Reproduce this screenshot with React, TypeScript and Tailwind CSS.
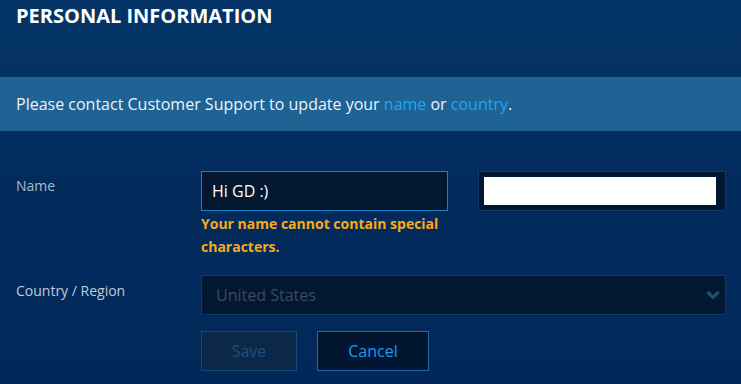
import { useState } from 'react';

const font = { fontFamily: '"Open Sans", "Liberation Sans", sans-serif' };

export default function App() {
  const [name, setName] = useState('Hi GD :)');

  return (
    <div
      style={font}
      className="w-[741px] h-[384px] overflow-hidden bg-gradient-to-b from-[#043566] via-[#022b5c] to-[#02285a] text-white"
    >
      <h1 className="px-4 pt-[2px] h-[77px] text-[20px] font-bold leading-[28px] tracking-[0px]">
        PERSONAL INFORMATION
      </h1>

      <div className="h-[54px] bg-[#1f6294] px-4 flex items-center text-[16px] text-[#eef3f8]">
        <p>
          Please contact Customer Support to update your{' '}
          <a className="text-[#1ea7f5]">name</a> or <a className="text-[#1ea7f5]">country</a>.
        </p>
      </div>

      <div className="pl-4 pt-10">
        <div className="flex">
          <label className="w-[185px] pt-[4px] text-[14px] text-[#a8b9cc]">Name</label>
          <div className="w-[248px]">
            <input
              value={name}
              onChange={(e) => setName(e.target.value)}
              className="w-[247px] h-10 border border-[#1a80c4] bg-[#031830] px-[10px] text-[16px] text-white outline-none"
            />
            <p className="mt-[1px] text-[14px] font-bold leading-[23px] text-[#f6aa1c]">
              Your name cannot contain special characters.
            </p>
          </div>
          <div className="ml-[29px] w-[248px] h-10 border border-[#0d3a66] bg-[#011631] p-[5px] pr-[9px]">
            <div className="h-[28px] bg-white" />
          </div>
        </div>

        <div className="flex mt-[17px]">
          <label className="w-[185px] pt-[5px] text-[14px] text-[#c0ccd8]">Country / Region</label>
          <div className="relative w-[525px] h-[40px] border border-[#0d3a66] bg-[#021731] flex items-center px-[14px]">
            <span className="text-[16px] text-[#3b4b5e]">United States</span>
            <svg
              className="absolute right-[5px] top-[14px]"
              width="14"
              height="10"
              viewBox="0 0 14 10"
              fill="none"
              stroke="#224e6e"
              strokeWidth="3.2"
            >
              <path d="M1.5 2 L7 7.5 L12.5 2" />
            </svg>
          </div>
        </div>

        <div className="flex gap-[20px] pl-[185px] mt-[16px]">
          <button className="w-[96px] h-10 border border-[#124a7a] bg-[#0b2849] text-[16px] text-[#1c4f7f]">
            Save
          </button>
          <button className="w-[112px] h-10 border border-[#1d6aa5] bg-[#021631] text-[16px] text-[#1b9cf0]">
            Cancel
          </button>
        </div>
      </div>
    </div>
  );
}
